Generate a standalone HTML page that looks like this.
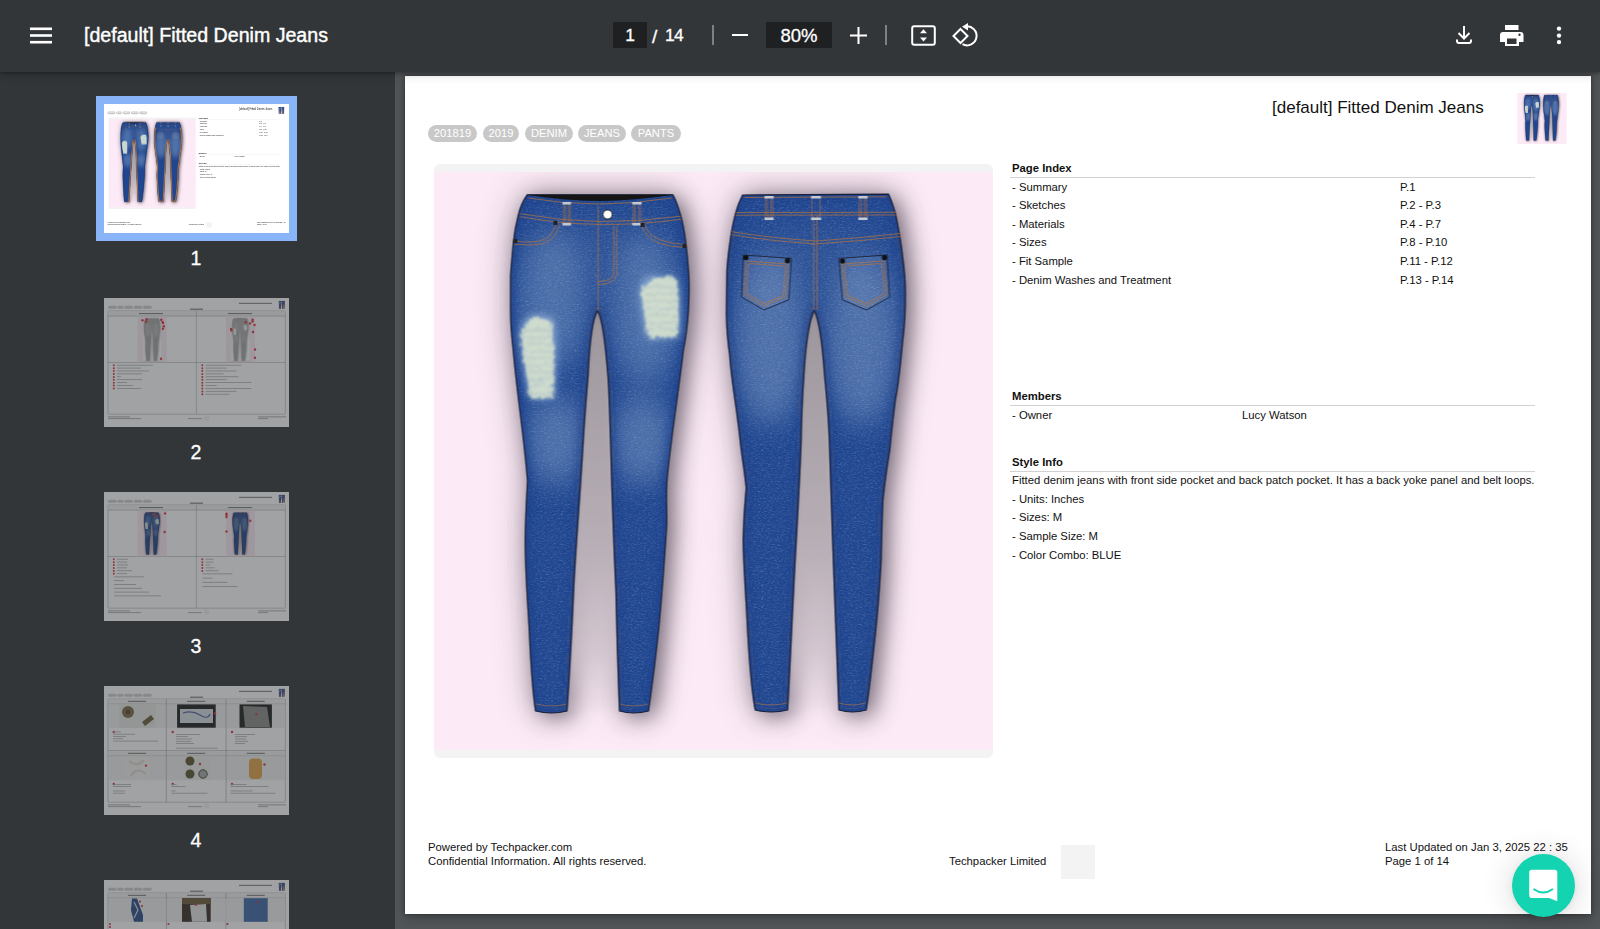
<!DOCTYPE html>
<html><head><meta charset="utf-8">
<style>
html,body{margin:0;padding:0;}
body{width:1600px;height:929px;overflow:hidden;position:relative;background:#525659;font-family:"Liberation Sans",sans-serif;}
#toolbar{position:absolute;left:0;top:0;width:1600px;height:72px;background:#323639;z-index:5;box-shadow:0 1px 4px rgba(0,0,0,.35),0 3px 10px rgba(0,0,0,.15);color:#fff;}
#sidebar{position:absolute;left:0;top:72px;width:395px;height:857px;background:#323639;z-index:2;overflow:hidden;}
#page{position:absolute;left:405px;top:76px;width:1186px;height:838px;background:#fff;z-index:1;box-shadow:0 0 4px rgba(0,0,0,.35),0 4px 12px rgba(0,0,0,.25);}
.abs{position:absolute;}
.t{position:absolute;white-space:nowrap;font-size:11.3px;color:#111;line-height:1;}
.b{font-weight:bold;}
.tag{position:absolute;top:48.5px;height:17px;border-radius:9px;background:#c8c8c8;color:#fff;font-size:11.2px;line-height:17px;text-align:center;}
.hr{position:absolute;height:1px;background:#d2d2d2;}
.num{position:absolute;color:#fff;font-size:19.5px;-webkit-text-stroke:0.3px #fff;width:40px;text-align:center;left:176px;}
.thumb{position:absolute;left:104px;width:185px;height:129px;background:#a0a1a3;}
</style></head><body>
<svg width="0" height="0" style="position:absolute">
<defs>
<filter id="shd" x="-30%" y="-10%" width="160%" height="130%">
<feGaussianBlur stdDeviation="11"/>
</filter>
<filter id="shd2" x="-40%" y="-15%" width="180%" height="130%"><feGaussianBlur stdDeviation="18"/></filter>
<filter id="glow" x="-50%" y="-50%" width="200%" height="200%"><feGaussianBlur stdDeviation="14"/></filter>
<filter id="edge" x="-10%" y="-10%" width="120%" height="120%"><feGaussianBlur stdDeviation="3"/></filter>
<filter id="noise" x="0" y="0" width="100%" height="100%"><feTurbulence type="fractalNoise" baseFrequency="0.7" numOctaves="2" seed="3"/><feColorMatrix type="matrix" values="0 0 0 0 0.55  0 0 0 0 0.7  0 0 0 0 0.95  3 0 0 0 -1.5"/></filter>
<filter id="noiseD" x="0" y="0" width="100%" height="100%"><feTurbulence type="fractalNoise" baseFrequency="0.7" numOctaves="2" seed="11"/><feColorMatrix type="matrix" values="0 0 0 0 0.05  0 0 0 0 0.12  0 0 0 0 0.38  -3 0 0 0 1.5"/></filter>
<filter id="gapb" x="-20%" y="-5%" width="140%" height="110%"><feGaussianBlur stdDeviation="2"/></filter>
<linearGradient id="gapg" x1="0" y1="0" x2="0" y2="1"><stop offset="0" stop-color="#9d969c"/><stop offset="0.3" stop-color="#aaa3a9"/><stop offset="0.6" stop-color="#b9afb7"/><stop offset="0.85" stop-color="#cdc1ca" stop-opacity="0.8"/><stop offset="1" stop-color="#dccfd9" stop-opacity="0.2"/></linearGradient>
<filter id="bw" x="0" y="0" width="100%" height="100%"><feColorMatrix type="matrix" values="0.25 0.45 0.1 0 0.32  0.25 0.45 0.1 0 0.32  0.25 0.45 0.1 0 0.32  0 0 0 1 0"/></filter>
<filter id="patchB" x="-30%" y="-30%" width="160%" height="160%"><feTurbulence type="turbulence" baseFrequency="0.35 0.12" numOctaves="2" seed="5" result="t"/><feDisplacementMap in="SourceGraphic" in2="t" scale="7" xChannelSelector="R" yChannelSelector="G" result="d"/><feGaussianBlur in="d" stdDeviation="1"/></filter><filter id="patchHalo" x="-50%" y="-50%" width="200%" height="200%"><feGaussianBlur stdDeviation="4"/></filter>
<filter id="stitch" x="-5%" y="-5%" width="110%" height="110%" color-interpolation-filters="sRGB"><feMorphology in="SourceAlpha" operator="erode" radius="2.5" result="e1"/><feMorphology in="SourceAlpha" operator="erode" radius="3.3" result="e2"/><feComposite in="e1" in2="e2" operator="out" result="ring"/><feFlood flood-color="#b8743a" flood-opacity="0.9"/><feComposite in2="ring" operator="in"/></filter>
<clipPath id="fInClip"><path d="M585,300 L610,300 L632,725 L553,725 Z"/></clipPath>
<clipPath id="bInClip"><path d="M700,228 L930,228 L930,725 L700,725 Z"/></clipPath>
<clipPath id="jclip"><use href="#fOut"/><use href="#bOut"/></clipPath>
<linearGradient id="frontShade" x1="0" y1="0" x2="0" y2="1" gradientUnits="objectBoundingBox">
<stop offset="0" stop-color="#3464b8"/>
<stop offset="0.18" stop-color="#4a78c0"/>
<stop offset="0.35" stop-color="#4b78bf"/>
<stop offset="0.55" stop-color="#3160b4"/>
<stop offset="0.75" stop-color="#2b58ad"/>
<stop offset="1" stop-color="#2955ab"/>
</linearGradient>
<linearGradient id="backShade" x1="0" y1="0" x2="0" y2="1" gradientUnits="objectBoundingBox">
<stop offset="0" stop-color="#2f5fb4"/>
<stop offset="0.2" stop-color="#4a78c0"/>
<stop offset="0.38" stop-color="#4a77be"/>
<stop offset="0.55" stop-color="#2f5db2"/>
<stop offset="1" stop-color="#2955ab"/>
</linearGradient>
<symbol id="jeans" viewBox="433.5 172 559.5 578">
<rect x="433.5" y="172" width="559.5" height="578" fill="#fcebf6"/>
<g filter="url(#shd2)" opacity="0.45" fill="#5a4f5e"><use href="#fOut"/><use href="#bOut"/></g>
<g filter="url(#shd)" opacity="0.75" transform="translate(6,4)" fill="#564c5a">
<path id="fOut" d="M526.7,194.8 L672.4,194.8 C676,201 678,208 680.3,215.8 C684,228 687,255 688.4,276 C689,292 688.5,302 687.9,311 C687,325 685,340 682.9,350 C677,400 668,455 666.2,485 C665.5,500 666.5,515 666.2,525 C664,560 661,600 658.3,628 C655,660 651,690 648,711 Q633,715 619,711 C617,660 616,620 615.4,591 C613,540 611,480 610,440 C609,410 608.5,390 607.4,376 C605,345 602,318 597.1,310.7 C592,318 589,345 587.6,376 C586,395 584,420 582.8,440 C580,490 575,550 573.1,591 C571,640 568,690 566.5,711 Q551,715 535,711 C532,690 530,660 528.7,629 C527,600 524.7,570 524.7,541 C524.8,520 526,500 527,481 C524,440 516,390 512.7,350 C511,335 510,322 510,311 C510,295 510,285 510,276 C511,262 512,252 512.9,242 C514,232 516,222 518.1,214 C520,206 523,200 526.7,194.8 Z"/>
<path id="bOut" d="M742.1,195 L887.9,194.1 C891,200 893,207 895,213.6 C898,228 901,245 902.1,256.4 C904,270 905,285 905,293.6 C905,310 904,328 902.1,342 C900,365 898,385 895,399 C893,415 891,432 889.3,450 C886,470 884,485 882.5,500 C881.5,520 881,545 880.7,560.5 C879,590 877,615 874.7,635.8 C872,660 869,690 865.7,710 Q852,714 838.4,710 C837,670 835,620 833.9,591 C832,540 830,480 828.8,440 C828,420 826,395 824.1,376.2 C822,345 818,318 813.8,310.7 C809,318 805,345 803.4,376.2 C802,395 801,420 800.7,440 C799,490 795,550 793.1,591 C791,630 789,680 787.1,710 Q771,714 754.7,710 C751,690 748,650 746.6,620.7 C745,590 742.7,560 742.7,539.4 C743,520 744.5,500 745.7,488 C744,470 741,455 739.6,440 C738,425 737,420 736.4,413.6 C733,390 730,370 729.3,356 C727,340 726,325 725.9,313.6 C726,295 726.2,280 726.4,270.7 C727,258 729,245 730.7,233.6 C732,226 733.5,219 735,213.6 C737,206 739.5,200 742.1,195 Z"/>
</g>
<g filter="url(#gapb)">
<path d="M597.1,312 C592,318 589,345 587.6,376 C586,395 584,420 582.8,440 C580,490 575,550 573.1,591 C571,640 568,690 566.5,711 L619,711 C617,660 616,620 615.4,591 C613,540 611,480 610,440 C609,410 608.5,390 607.4,376 C605,345 602,318 597.1,312 Z" fill="url(#gapg)"/>
<path d="M813.8,312 C809,318 805,345 803.4,376.2 C802,395 801,420 800.7,440 C799,490 795,550 793.1,591 C791,630 789,680 787.1,710 L838.4,710 C837,670 835,620 833.9,591 C832,540 830,480 828.8,440 C828,420 826,395 824.1,376.2 C822,345 818,318 813.8,312 Z" fill="url(#gapg)"/>
</g>
<g clip-path="url(#jclip)">
<rect x="500" y="185" width="420" height="540" fill="#20468f"/>
<g filter="url(#glow)" fill="#5c7db1">
<ellipse cx="552" cy="300" rx="34" ry="70" opacity="0.75"/>
<ellipse cx="556" cy="440" rx="30" ry="45" opacity="0.8"/>
<ellipse cx="645" cy="310" rx="34" ry="75" opacity="0.75"/>
<ellipse cx="642" cy="440" rx="30" ry="45" opacity="0.8"/>
<ellipse cx="770" cy="340" rx="36" ry="85" opacity="0.8"/>
<ellipse cx="862" cy="340" rx="36" ry="85" opacity="0.8"/>
<ellipse cx="600" cy="250" rx="70" ry="30" opacity="0.2"/>
<ellipse cx="815" cy="255" rx="70" ry="30" opacity="0.2"/>
</g>
<rect x="500" y="185" width="420" height="540" filter="url(#noise)" opacity="0.28"/><rect x="500" y="185" width="420" height="540" filter="url(#noiseD)" opacity="0.5"/>
<g fill="none" stroke="#1d3f8a" stroke-width="10" filter="url(#edge)" opacity="0.6">
<use href="#fOut"/><use href="#bOut"/>
</g>
</g>
<g fill="none" stroke="#1b2238" stroke-width="1.2"><use href="#fOut"/><use href="#bOut"/></g>
<path d="M526.7,194.8 L672.4,194.8 Q597,207 526.7,194.8 Z" fill="#151515"/>
<g fill="none" stroke="#b8743a" stroke-width="0.7">
<path d="M528,198 Q597,210 671,198"/>
<path d="M519.3,213.6 Q597,228 680.3,216.2"/>
<path d="M519.5,216.6 Q597,231 680.8,219.2"/>
<path d="M597.7,206 L597.7,311"/>
<path d="M613.2,226 L613.2,274 Q612,281 598,281.5"/>
<path d="M616.2,226 L616.2,275 Q614.5,284 598,284.5"/>
<path d="M514,241.2 Q545,245 552,232 Q555,227 556.3,224"/>
<path d="M514,244.2 Q548,248 555,234 Q558,229 559.3,225"/>
<path d="M645,225.6 Q647,235 660,240 Q672,244 684,244.5"/>
<path d="M641.8,226 Q644,237 658,243 Q670,247 684.5,247.5"/>
</g>
<g fill="none" stroke="#b8743a" stroke-width="0.6">
<path d="M563,204 L563,224 M564.8,204 L564.8,224 M568,204 L568,224 M569.8,204 L569.8,224 M632.7,204 L632.7,224 M634.5,204 L634.5,224 M638.3,204 L638.3,224 M640.1,204 L640.1,224"/>
</g>
<g fill="#c4c9d4"><rect x="562" y="202" width="8.5" height="2.5"/><rect x="562" y="223" width="8.5" height="2.5"/><rect x="631.7" y="202" width="9.4" height="2.5"/><rect x="631.7" y="223" width="9.4" height="2.5"/></g>
<circle cx="607.1" cy="214.5" r="4.6" fill="#fff" stroke="#222" stroke-width="1"/>
<g fill="#222"><rect x="553" y="221" width="4" height="4"/><rect x="513" y="239" width="4" height="4"/><rect x="640" y="223" width="4" height="4"/><rect x="682" y="244" width="4" height="4"/></g>
<!-- distressed patches -->
<g filter="url(#patchHalo)" fill="#9ab8dc" opacity="0.9">
<path d="M646,277 L674,278 C679,285 679,320 678,337 L647,338 C643,320 640,300 640,287 Z"/>
<path d="M526,318 C535,314 548,316 553,320 C555,345 555,375 553,398 L529,398 C524,375 520,345 520,330 Z"/>
</g>
<g transform="translate(-2,-1.5)"><g filter="url(#patchB)" fill="#d6e0cc" opacity="0.9">
<path d="M655,277 C662,276 670,277 676,279 C678,292 678,320 678,337 L648,338 C645,322 642,305 641,291 C645,286 650,281 655,277 Z"/>
<path d="M532,318 C540,317 548,319 552,322 C554,345 554,375 553,398 L530,398 C526,375 522,350 521,333 C524,327 527,322 532,318 Z"/>
</g>
<g stroke="#7f9cc0" stroke-width="0.9" opacity="0.45" fill="none" filter="url(#patchB)">
<path d="M646,287 Q660,285 677,288 M643,294 Q660,296 677,293 M644,301 Q660,299 677,302 M645,308 Q662,310 677,307 M646,315 Q660,313 677,316 M647,322 Q662,324 677,321 M647,329 Q660,327 677,330"/>
<path d="M524,330 Q538,328 552,331 M524,337 Q538,339 552,336 M525,344 Q538,342 552,345 M525,351 Q538,353 552,350 M526,358 Q538,356 552,359 M527,365 Q538,367 552,364 M528,372 Q538,370 552,373 M528,379 Q538,381 552,378 M529,386 Q538,384 552,387 M529,393 Q538,395 552,392"/>
</g></g>

<g fill="none" stroke="#b8743a" stroke-width="0.7">
<path d="M744,197.5 L886,196.8"/>
<path d="M735.5,212.6 L895,212.3"/>
<path d="M735,215.2 L895.5,215"/>
<path d="M731,231.7 Q770,238 815,241 Q860,238 901,233.4"/>
<path d="M730.5,234.7 Q770,241 815,244 Q860,241 901.5,236.4"/>
<path d="M813.2,216 L813.2,310"/>
<path d="M816.6,216 L816.6,310"/>
</g>
<g fill="#ffffff" fill-opacity="0.05" stroke="#1b2238" stroke-width="0.9">
<path d="M742.7,255 L791,258.4 L788.4,299.7 L763.4,310 L741,297.1 Z"/>
<path d="M838.3,258.4 L886.6,255 L889.2,297.1 L865.9,310 L841.8,299.7 Z"/>
</g>
<g fill="none" stroke="#b8743a" stroke-width="0.7">
<path d="M745.5,261 L787.5,264 L785,297 L763.5,306 L744,295 Z"/>
<path d="M841.5,264 L883.5,261 L886,295 L866,306 L845,297 Z"/>
<path d="M747.8,263.5 L785.2,266.2 L782.8,295.5 L763.5,303.5 L746.3,293.6 Z"/>
<path d="M843.8,266.2 L881.2,263.5 L883.7,293.6 L866,303.5 L847.2,295.5 Z"/>
</g>
<g fill="none" stroke="#b8743a" stroke-width="0.6">
<path d="M765,198 L765,218 M767,198 L767,218 M770.5,198 L770.5,218 M772.4,198 L772.4,218 M811.5,198 L811.5,218 M819.5,198 L819.5,218 M858.8,198 L858.8,218 M860.8,198 L860.8,218 M864.2,198 L864.2,218 M866.2,198 L866.2,218"/>
</g>
<g fill="#c4c9d4"><rect x="764" y="196" width="9.2" height="2.5"/><rect x="764" y="217.5" width="9.2" height="2.5"/><rect x="810.5" y="196" width="10" height="2.5"/><rect x="810.5" y="217.5" width="10" height="2.5"/><rect x="857.8" y="196" width="9.3" height="2.5"/><rect x="857.8" y="217.5" width="9.3" height="2.5"/></g>
<g fill="#111"><circle cx="745.4" cy="257.5" r="2.6"/><circle cx="787" cy="260.7" r="2.6"/><circle cx="842" cy="261" r="2.6"/><circle cx="884" cy="257.6" r="2.6"/></g>

<g filter="url(#stitch)" clip-path="url(#fInClip)"><use href="#fOut" fill="#000"/></g>
<g filter="url(#stitch)" clip-path="url(#bInClip)"><use href="#bOut" fill="#000"/></g>
<g fill="none" stroke="#b8743a" stroke-width="0.6">
<path d="M535.5,704 Q551,708 566,704"/><path d="M619.5,704 Q633,708 647.5,704"/><path d="M755,703 Q771,707 786.5,703"/><path d="M838.5,703 Q852,707 865,703"/>
</g>
</symbol>
<symbol id="jeansS" viewBox="433.5 172 559.5 578">
<rect x="433.5" y="172" width="559.5" height="578" fill="#fcebf6"/>
<g filter="url(#shd2)" opacity="0.45" fill="#5a4f5e"><use href="#fOut"/><use href="#bOut"/></g>
<g filter="url(#shd)" opacity="0.75" transform="translate(6,4)" fill="#564c5a">
<path id="fOutS" d="M526.7,194.8 L672.4,194.8 C676,201 678,208 680.3,215.8 C684,228 687,255 688.4,276 C689,292 688.5,302 687.9,311 C687,325 685,340 682.9,350 C677,400 668,455 666.2,485 C665.5,500 666.5,515 666.2,525 C664,560 661,600 658.3,628 C655,660 651,690 648,711 Q633,715 619,711 C617,660 616,620 615.4,591 C613,540 611,480 610,440 C609,410 608.5,390 607.4,376 C605,345 602,318 597.1,310.7 C592,318 589,345 587.6,376 C586,395 584,420 582.8,440 C580,490 575,550 573.1,591 C571,640 568,690 566.5,711 Q551,715 535,711 C532,690 530,660 528.7,629 C527,600 524.7,570 524.7,541 C524.8,520 526,500 527,481 C524,440 516,390 512.7,350 C511,335 510,322 510,311 C510,295 510,285 510,276 C511,262 512,252 512.9,242 C514,232 516,222 518.1,214 C520,206 523,200 526.7,194.8 Z"/>
<path id="bOutS" d="M742.1,195 L887.9,194.1 C891,200 893,207 895,213.6 C898,228 901,245 902.1,256.4 C904,270 905,285 905,293.6 C905,310 904,328 902.1,342 C900,365 898,385 895,399 C893,415 891,432 889.3,450 C886,470 884,485 882.5,500 C881.5,520 881,545 880.7,560.5 C879,590 877,615 874.7,635.8 C872,660 869,690 865.7,710 Q852,714 838.4,710 C837,670 835,620 833.9,591 C832,540 830,480 828.8,440 C828,420 826,395 824.1,376.2 C822,345 818,318 813.8,310.7 C809,318 805,345 803.4,376.2 C802,395 801,420 800.7,440 C799,490 795,550 793.1,591 C791,630 789,680 787.1,710 Q771,714 754.7,710 C751,690 748,650 746.6,620.7 C745,590 742.7,560 742.7,539.4 C743,520 744.5,500 745.7,488 C744,470 741,455 739.6,440 C738,425 737,420 736.4,413.6 C733,390 730,370 729.3,356 C727,340 726,325 725.9,313.6 C726,295 726.2,280 726.4,270.7 C727,258 729,245 730.7,233.6 C732,226 733.5,219 735,213.6 C737,206 739.5,200 742.1,195 Z"/>
</g>
<g filter="url(#gapb)">
<path d="M597.1,312 C592,318 589,345 587.6,376 C586,395 584,420 582.8,440 C580,490 575,550 573.1,591 C571,640 568,690 566.5,711 L619,711 C617,660 616,620 615.4,591 C613,540 611,480 610,440 C609,410 608.5,390 607.4,376 C605,345 602,318 597.1,312 Z" fill="url(#gapg)"/>
<path d="M813.8,312 C809,318 805,345 803.4,376.2 C802,395 801,420 800.7,440 C799,490 795,550 793.1,591 C791,630 789,680 787.1,710 L838.4,710 C837,670 835,620 833.9,591 C832,540 830,480 828.8,440 C828,420 826,395 824.1,376.2 C822,345 818,318 813.8,312 Z" fill="url(#gapg)"/>
</g>
<g clip-path="url(#jclip)">
<rect x="500" y="185" width="420" height="540" fill="#20468f"/>
<g filter="url(#glow)" fill="#5c7db1">
<ellipse cx="552" cy="300" rx="34" ry="70" opacity="0.75"/>
<ellipse cx="556" cy="440" rx="30" ry="45" opacity="0.8"/>
<ellipse cx="645" cy="310" rx="34" ry="75" opacity="0.75"/>
<ellipse cx="642" cy="440" rx="30" ry="45" opacity="0.8"/>
<ellipse cx="770" cy="340" rx="36" ry="85" opacity="0.8"/>
<ellipse cx="862" cy="340" rx="36" ry="85" opacity="0.8"/>
<ellipse cx="600" cy="250" rx="70" ry="30" opacity="0.2"/>
<ellipse cx="815" cy="255" rx="70" ry="30" opacity="0.2"/>
</g>

<g fill="none" stroke="#1d3f8a" stroke-width="10" filter="url(#edge)" opacity="0.6">
<use href="#fOut"/><use href="#bOut"/>
</g>
</g>
<g fill="none" stroke="#1b2238" stroke-width="1.2"><use href="#fOut"/><use href="#bOut"/></g>
<path d="M526.7,194.8 L672.4,194.8 Q597,207 526.7,194.8 Z" fill="#151515"/>
<g fill="none" stroke="#b8743a" stroke-width="0.7">
<path d="M528,198 Q597,210 671,198"/>
<path d="M519.3,213.6 Q597,228 680.3,216.2"/>
<path d="M519.5,216.6 Q597,231 680.8,219.2"/>
<path d="M597.7,206 L597.7,311"/>
<path d="M613.2,226 L613.2,274 Q612,281 598,281.5"/>
<path d="M616.2,226 L616.2,275 Q614.5,284 598,284.5"/>
<path d="M514,241.2 Q545,245 552,232 Q555,227 556.3,224"/>
<path d="M514,244.2 Q548,248 555,234 Q558,229 559.3,225"/>
<path d="M645,225.6 Q647,235 660,240 Q672,244 684,244.5"/>
<path d="M641.8,226 Q644,237 658,243 Q670,247 684.5,247.5"/>
</g>
<g fill="none" stroke="#b8743a" stroke-width="0.6">
<path d="M563,204 L563,224 M564.8,204 L564.8,224 M568,204 L568,224 M569.8,204 L569.8,224 M632.7,204 L632.7,224 M634.5,204 L634.5,224 M638.3,204 L638.3,224 M640.1,204 L640.1,224"/>
</g>
<g fill="#c4c9d4"><rect x="562" y="202" width="8.5" height="2.5"/><rect x="562" y="223" width="8.5" height="2.5"/><rect x="631.7" y="202" width="9.4" height="2.5"/><rect x="631.7" y="223" width="9.4" height="2.5"/></g>
<circle cx="607.1" cy="214.5" r="4.6" fill="#fff" stroke="#222" stroke-width="1"/>
<g fill="#222"><rect x="553" y="221" width="4" height="4"/><rect x="513" y="239" width="4" height="4"/><rect x="640" y="223" width="4" height="4"/><rect x="682" y="244" width="4" height="4"/></g>
<!-- distressed patches -->
<g filter="url(#patchHalo)" fill="#9ab8dc" opacity="0.9">
<path d="M646,277 L674,278 C679,285 679,320 678,337 L647,338 C643,320 640,300 640,287 Z"/>
<path d="M526,318 C535,314 548,316 553,320 C555,345 555,375 553,398 L529,398 C524,375 520,345 520,330 Z"/>
</g>
<g transform="translate(-2,-1.5)"><g filter="url(#patchB)" fill="#d6e0cc" opacity="0.9">
<path d="M655,277 C662,276 670,277 676,279 C678,292 678,320 678,337 L648,338 C645,322 642,305 641,291 C645,286 650,281 655,277 Z"/>
<path d="M532,318 C540,317 548,319 552,322 C554,345 554,375 553,398 L530,398 C526,375 522,350 521,333 C524,327 527,322 532,318 Z"/>
</g>
<g stroke="#7f9cc0" stroke-width="0.9" opacity="0.45" fill="none" filter="url(#patchB)">
<path d="M646,287 Q660,285 677,288 M643,294 Q660,296 677,293 M644,301 Q660,299 677,302 M645,308 Q662,310 677,307 M646,315 Q660,313 677,316 M647,322 Q662,324 677,321 M647,329 Q660,327 677,330"/>
<path d="M524,330 Q538,328 552,331 M524,337 Q538,339 552,336 M525,344 Q538,342 552,345 M525,351 Q538,353 552,350 M526,358 Q538,356 552,359 M527,365 Q538,367 552,364 M528,372 Q538,370 552,373 M528,379 Q538,381 552,378 M529,386 Q538,384 552,387 M529,393 Q538,395 552,392"/>
</g></g>

<g fill="none" stroke="#b8743a" stroke-width="0.7">
<path d="M744,197.5 L886,196.8"/>
<path d="M735.5,212.6 L895,212.3"/>
<path d="M735,215.2 L895.5,215"/>
<path d="M731,231.7 Q770,238 815,241 Q860,238 901,233.4"/>
<path d="M730.5,234.7 Q770,241 815,244 Q860,241 901.5,236.4"/>
<path d="M813.2,216 L813.2,310"/>
<path d="M816.6,216 L816.6,310"/>
</g>
<g fill="#ffffff" fill-opacity="0.05" stroke="#1b2238" stroke-width="0.9">
<path d="M742.7,255 L791,258.4 L788.4,299.7 L763.4,310 L741,297.1 Z"/>
<path d="M838.3,258.4 L886.6,255 L889.2,297.1 L865.9,310 L841.8,299.7 Z"/>
</g>
<g fill="none" stroke="#b8743a" stroke-width="0.7">
<path d="M745.5,261 L787.5,264 L785,297 L763.5,306 L744,295 Z"/>
<path d="M841.5,264 L883.5,261 L886,295 L866,306 L845,297 Z"/>
<path d="M747.8,263.5 L785.2,266.2 L782.8,295.5 L763.5,303.5 L746.3,293.6 Z"/>
<path d="M843.8,266.2 L881.2,263.5 L883.7,293.6 L866,303.5 L847.2,295.5 Z"/>
</g>
<g fill="none" stroke="#b8743a" stroke-width="0.6">
<path d="M765,198 L765,218 M767,198 L767,218 M770.5,198 L770.5,218 M772.4,198 L772.4,218 M811.5,198 L811.5,218 M819.5,198 L819.5,218 M858.8,198 L858.8,218 M860.8,198 L860.8,218 M864.2,198 L864.2,218 M866.2,198 L866.2,218"/>
</g>
<g fill="#c4c9d4"><rect x="764" y="196" width="9.2" height="2.5"/><rect x="764" y="217.5" width="9.2" height="2.5"/><rect x="810.5" y="196" width="10" height="2.5"/><rect x="810.5" y="217.5" width="10" height="2.5"/><rect x="857.8" y="196" width="9.3" height="2.5"/><rect x="857.8" y="217.5" width="9.3" height="2.5"/></g>
<g fill="#111"><circle cx="745.4" cy="257.5" r="2.6"/><circle cx="787" cy="260.7" r="2.6"/><circle cx="842" cy="261" r="2.6"/><circle cx="884" cy="257.6" r="2.6"/></g>

<g filter="url(#stitch)" clip-path="url(#fInClip)"><use href="#fOut" fill="#000"/></g>
<g filter="url(#stitch)" clip-path="url(#bInClip)"><use href="#bOut" fill="#000"/></g>
<g fill="none" stroke="#b8743a" stroke-width="0.6">
<path d="M535.5,704 Q551,708 566,704"/><path d="M619.5,704 Q633,708 647.5,704"/><path d="M755,703 Q771,707 786.5,703"/><path d="M838.5,703 Q852,707 865,703"/>
</g>
</symbol>













</defs>
</svg>

<div id="toolbar">
  <svg class="abs" style="left:30px;top:27px" width="22" height="17" viewBox="0 0 22 17"><rect x="0" y="0.5" width="22" height="2.6" fill="#fff"/><rect x="0" y="7.2" width="22" height="2.6" fill="#fff"/><rect x="0" y="13.9" width="22" height="2.6" fill="#fff"/></svg>
  <div class="abs" style="left:84px;top:24px;font-size:19.6px;line-height:22px;color:#fff;white-space:nowrap;-webkit-text-stroke:0.4px #fff;">[default] Fitted Denim Jeans</div>
  <div class="abs" style="left:613px;top:22px;width:34px;height:26px;background:#1e2022;"></div>
  <div class="abs" style="left:613px;top:26px;width:34px;text-align:center;font-size:17.4px;line-height:19px;color:#fff;-webkit-text-stroke:0.3px #fff;">1</div>
  <div class="abs" style="left:652px;top:26.5px;font-size:19px;line-height:20px;color:#fff;-webkit-text-stroke:0.3px #fff;">/</div><div class="abs" style="left:665px;top:26px;font-size:17.4px;line-height:19px;color:#fff;letter-spacing:-0.6px;-webkit-text-stroke:0.3px #fff;">14</div>
  <div class="abs" style="left:712px;top:25px;width:1.5px;height:20px;background:#7d8084;"></div>
  <div class="abs" style="left:732px;top:34px;width:16px;height:2px;background:#fff;"></div>
  <div class="abs" style="left:766px;top:22px;width:66px;height:26px;background:#1e2022;"></div>
  <div class="abs" style="left:766px;top:25.5px;width:66px;text-align:center;font-size:18.5px;line-height:20px;color:#fff;-webkit-text-stroke:0.3px #fff;">80%</div>
  <svg class="abs" style="left:850px;top:27px" width="17" height="17" viewBox="0 0 17 17"><rect x="0" y="7.5" width="17" height="2" fill="#fff"/><rect x="7.5" y="0" width="2" height="17" fill="#fff"/></svg>
  <div class="abs" style="left:885px;top:25px;width:1.5px;height:20px;background:#7d8084;"></div>
  <svg class="abs" style="left:910px;top:24px" width="28" height="24" viewBox="0 0 28 24"><rect x="2.2" y="2.2" width="22.6" height="18.6" rx="2" fill="none" stroke="#fff" stroke-width="2"/><path d="M13.5,5.2 L17,9.2 L10,9.2 Z M13.5,17.4 L17,13.4 L10,13.4 Z" fill="#fff"/></svg>
  <svg class="abs" style="left:950px;top:22px" width="30" height="28" viewBox="0 0 30 28"><path d="M10.5,7 L17.5,14 L10.5,21 L3.5,14 Z" fill="none" stroke="#fff" stroke-width="2"/><path d="M15.5,4.5 A9.5,9.5 0 1 1 12.5,22.2" fill="none" stroke="#fff" stroke-width="2"/><path d="M18,1 L18,8.5 L12,4.8 Z" fill="#fff"/></svg>
  <svg class="abs" style="left:1454px;top:24px" width="20" height="22" viewBox="0 0 20 22"><path d="M10,2 L10,14" stroke="#fff" stroke-width="2" fill="none"/><path d="M4.5,9 L10,14.5 L15.5,9" stroke="#fff" stroke-width="2" fill="none"/><path d="M3,15.5 L3,17 Q3,19 5,19 L15,19 Q17,19 17,17 L17,15.5" stroke="#fff" stroke-width="2" fill="none"/></svg>
  <svg class="abs" style="left:1499px;top:24px" width="26" height="23" viewBox="0 0 26 23"><rect x="6" y="1" width="13.5" height="5" fill="#fff"/><path d="M1,11 Q1,8 4,8 L21.5,8 Q24.5,8 24.5,11 L24.5,18 L20,18 L20,22 L6,22 L6,18 L1,18 Z" fill="#fff"/><rect x="8" y="14.5" width="9.5" height="5.5" fill="#323639"/><circle cx="20.5" cy="10.8" r="1.2" fill="#323639"/></svg>
  <svg class="abs" style="left:1554px;top:24px" width="10" height="23" viewBox="0 0 10 23"><circle cx="5" cy="4.6" r="2.2" fill="#fff"/><circle cx="5" cy="11.6" r="2.2" fill="#fff"/><circle cx="5" cy="18.1" r="2.2" fill="#fff"/></svg>
</div>

<div id="sidebar">
  <div class="abs" style="left:96px;top:24px;width:201px;height:145px;background:#8ab4f8;"></div>
  <div class="abs" style="left:104px;top:32px;width:185px;height:129px;background:#fff;overflow:hidden;"><div id="th1" style="position:absolute;left:0;top:0;width:1186px;height:838px;transform-origin:0 0;transform:scale(0.156,0.1539);"><!--TH1-->
  <div class="t" style="left:867px;top:23px;font-size:17px;">[default] Fitted Denim Jeans</div>
  <svg class="abs" style="left:1112px;top:17px" width="50" height="51"><use href="#jeansS" width="50" height="51"/></svg>
  <div class="tag" style="left:23px;width:49px;">201819</div>
  <div class="tag" style="left:78px;width:36px;">2019</div>
  <div class="tag" style="left:120px;width:48px;">DENIM</div>
  <div class="tag" style="left:173px;width:48px;">JEANS</div>
  <div class="tag" style="left:226px;width:50px;">PANTS</div>
  <div class="abs" style="left:28.5px;top:88px;width:559.5px;height:594px;background:#f3f3f3;border-radius:6px;"></div>
  <svg class="abs" style="left:28.5px;top:96px" width="559.5" height="578"><use href="#jeansS" width="559.5" height="578"/></svg>

  <div class="t b" style="left:607px;top:87px;">Page Index</div>
  <div class="hr" style="left:605px;top:101px;width:525px;"></div>
  <div class="t" style="left:607px;top:105.5px;">- Summary</div><div class="t" style="left:995px;top:105.5px;">P.1</div>
  <div class="t" style="left:607px;top:124px;">- Sketches</div><div class="t" style="left:995px;top:124px;">P.2 - P.3</div>
  <div class="t" style="left:607px;top:142.5px;">- Materials</div><div class="t" style="left:995px;top:142.5px;">P.4 - P.7</div>
  <div class="t" style="left:607px;top:161px;">- Sizes</div><div class="t" style="left:995px;top:161px;">P.8 - P.10</div>
  <div class="t" style="left:607px;top:180px;">- Fit Sample</div><div class="t" style="left:995px;top:180px;">P.11 - P.12</div>
  <div class="t" style="left:607px;top:198.5px;">- Denim Washes and Treatment</div><div class="t" style="left:995px;top:198.5px;">P.13 - P.14</div>

  <div class="t b" style="left:607px;top:315px;">Members</div>
  <div class="hr" style="left:605px;top:329px;width:525px;"></div>
  <div class="t" style="left:607px;top:333.5px;">- Owner</div><div class="t" style="left:837px;top:333.5px;">Lucy Watson</div>

  <div class="t b" style="left:607px;top:380.5px;">Style Info</div>
  <div class="hr" style="left:605px;top:394.5px;width:525px;"></div>
  <div class="t" style="left:607px;top:399px;">Fitted denim jeans with front side pocket and back patch pocket. It has a back yoke panel and belt loops.</div>
  <div class="t" style="left:607px;top:417.5px;">- Units: Inches</div>
  <div class="t" style="left:607px;top:436px;">- Sizes: M</div>
  <div class="t" style="left:607px;top:455px;">- Sample Size: M</div>
  <div class="t" style="left:607px;top:473.5px;">- Color Combo: BLUE</div>

  <div class="t" style="left:23px;top:766px;">Powered by Techpacker.com</div>
  <div class="t" style="left:23px;top:780px;">Confidential Information. All rights reserved.</div>
  <div class="t" style="left:544px;top:780px;">Techpacker Limited</div>
  <div class="abs" style="left:656px;top:769px;width:34px;height:34px;background:#f3f3f3;"></div>
  <div class="t" style="left:980px;top:766px;">Last Updated on Jan 3, 2025 22 : 35</div>
  <div class="t" style="left:980px;top:780px;">Page 1 of 14</div>
</div></div>
  <div class="num" style="top:175px;">1</div>
<div class="abs" style="left:104px;top:226px;width:185px;height:129px;opacity:0.54;"><svg width="185" height="129" viewBox="0 0 185 129"><rect width="185" height="129" fill="#fff"/><rect x="4" y="7.8" width="8.6" height="3" rx="1.5" fill="#cfcfcf"/><rect x="13.3" y="7.8" width="6.5" height="3" rx="1.5" fill="#cfcfcf"/><rect x="20.5" y="7.8" width="8.5" height="3" rx="1.5" fill="#cfcfcf"/><rect x="29.7" y="7.8" width="8.5" height="3" rx="1.5" fill="#cfcfcf"/><rect x="38.9" y="7.8" width="8.8" height="3" rx="1.5" fill="#cfcfcf"/><rect x="135" y="4.8" width="33" height="1.2" fill="#8a8a8a"/><svg x="174.5" y="2.5" width="6.5" height="8.5" viewBox="500 185 420 535" preserveAspectRatio="none"><use href="#jeansS" x="433.5" y="172" width="559.5" height="578"/></svg><rect x="4" y="118.5" width="22" height="0.8" fill="#9a9a9a"/><rect x="4" y="120.3" width="33" height="0.8" fill="#9a9a9a"/><rect x="84" y="120.3" width="14" height="0.8" fill="#9a9a9a"/><rect x="100" y="117.5" width="5" height="5" fill="#f2f2f2"/><rect x="154" y="118.5" width="28" height="0.8" fill="#9a9a9a"/><rect x="154" y="120.3" width="10" height="0.8" fill="#9a9a9a"/><rect x="86" y="10.6" width="13" height="1.2" fill="#808080"/><rect x="4" y="13" width="177.3" height="103.2" fill="none" stroke="#9a9a9a" stroke-width="0.5" rx="0.8"/><rect x="4.3" y="13.3" width="176.7" height="4.8" fill="#f2f2f2"/><line x1="4" y1="18.1" x2="181.3" y2="18.1" stroke="#9a9a9a" stroke-width="0.5"/><line x1="4" y1="64.5" x2="181.3" y2="64.5" stroke="#9a9a9a" stroke-width="0.5"/><line x1="92.4" y1="13" x2="92.4" y2="116.2" stroke="#9a9a9a" stroke-width="0.5"/><rect x="35" y="15" width="24" height="1.1" fill="#808080"/><rect x="124" y="15" width="24" height="1.1" fill="#808080"/><rect x="33.7" y="18.6" width="29" height="45.6" fill="#fcebf6"/><svg x="39.2" y="19.8" width="18" height="43.5" viewBox="715 185 205 535" preserveAspectRatio="none" filter="url(#bw)"><use href="#jeansS" x="433.5" y="172" width="559.5" height="578"/></svg><rect x="122" y="18.6" width="29" height="45.6" fill="#fcebf6"/><svg x="127.5" y="19.8" width="18" height="43.5" viewBox="500 185 205 535" preserveAspectRatio="none" filter="url(#bw)"><use href="#jeansS" x="433.5" y="172" width="559.5" height="578"/></svg><circle cx="9.8" cy="67.3" r="1" fill="#e2343f"/><rect x="13" y="66.8" width="36" height="0.75" fill="#a8a8a8"/><circle cx="9.8" cy="70.2" r="1" fill="#e2343f"/><rect x="13" y="69.7" width="24" height="0.75" fill="#a8a8a8"/><circle cx="9.8" cy="73.1" r="1" fill="#e2343f"/><rect x="13" y="72.6" width="32" height="0.75" fill="#a8a8a8"/><circle cx="9.8" cy="76.0" r="1" fill="#e2343f"/><rect x="13" y="75.5" width="25" height="0.75" fill="#a8a8a8"/><circle cx="9.8" cy="78.89999999999999" r="1" fill="#e2343f"/><rect x="13" y="78.39999999999999" width="4" height="0.75" fill="#a8a8a8"/><circle cx="9.8" cy="81.8" r="1" fill="#e2343f"/><rect x="13" y="81.3" width="25" height="0.75" fill="#a8a8a8"/><circle cx="9.8" cy="84.69999999999999" r="1" fill="#e2343f"/><rect x="13" y="84.19999999999999" width="10" height="0.75" fill="#a8a8a8"/><circle cx="9.8" cy="87.6" r="1" fill="#e2343f"/><rect x="13" y="87.1" width="16" height="0.75" fill="#a8a8a8"/><circle cx="9.8" cy="90.5" r="1" fill="#e2343f"/><rect x="13" y="90.0" width="24" height="0.75" fill="#a8a8a8"/><circle cx="98.3" cy="67.3" r="1" fill="#e2343f"/><rect x="101.5" y="66.8" width="36" height="0.75" fill="#a8a8a8"/><circle cx="98.3" cy="70.2" r="1" fill="#e2343f"/><rect x="101.5" y="69.7" width="21" height="0.75" fill="#a8a8a8"/><circle cx="98.3" cy="73.1" r="1" fill="#e2343f"/><rect x="101.5" y="72.6" width="31" height="0.75" fill="#a8a8a8"/><circle cx="98.3" cy="76.0" r="1" fill="#e2343f"/><rect x="101.5" y="75.5" width="18" height="0.75" fill="#a8a8a8"/><circle cx="98.3" cy="78.89999999999999" r="1" fill="#e2343f"/><rect x="101.5" y="78.39999999999999" width="33" height="0.75" fill="#a8a8a8"/><circle cx="98.3" cy="81.8" r="1" fill="#e2343f"/><rect x="101.5" y="81.3" width="21" height="0.75" fill="#a8a8a8"/><circle cx="98.3" cy="84.69999999999999" r="1" fill="#e2343f"/><rect x="101.5" y="84.19999999999999" width="46" height="0.75" fill="#a8a8a8"/><circle cx="98.3" cy="87.6" r="1" fill="#e2343f"/><rect x="101.5" y="87.1" width="11" height="0.75" fill="#a8a8a8"/><circle cx="98.3" cy="90.5" r="1" fill="#e2343f"/><rect x="101.5" y="90.0" width="46" height="0.75" fill="#a8a8a8"/><circle cx="98.3" cy="93.39999999999999" r="1" fill="#e2343f"/><rect x="101.5" y="92.89999999999999" width="31" height="0.75" fill="#a8a8a8"/><circle cx="98.3" cy="96.3" r="1" fill="#e2343f"/><rect x="101.5" y="95.8" width="24" height="0.75" fill="#a8a8a8"/><circle cx="38.5" cy="22.2" r="1.2" fill="#e2343f"/><circle cx="42.6" cy="21.4" r="1.2" fill="#e2343f"/><circle cx="42" cy="23.8" r="1.2" fill="#e2343f"/><circle cx="57.2" cy="21.8" r="1.2" fill="#e2343f"/><circle cx="58.5" cy="24" r="1.2" fill="#e2343f"/><circle cx="59" cy="25" r="1.2" fill="#e2343f"/><circle cx="59.8" cy="28.2" r="1.2" fill="#e2343f"/><circle cx="58.9" cy="30.8" r="1.2" fill="#e2343f"/><circle cx="57" cy="60.8" r="1.2" fill="#e2343f"/><circle cx="141.7" cy="24.2" r="1.2" fill="#e2343f"/><circle cx="148.6" cy="21.7" r="1.2" fill="#e2343f"/><circle cx="148.5" cy="23.5" r="1.2" fill="#e2343f"/><circle cx="146" cy="25.4" r="1.2" fill="#e2343f"/><circle cx="150.5" cy="27" r="1.2" fill="#e2343f"/><circle cx="127" cy="31" r="1.2" fill="#e2343f"/><circle cx="127.5" cy="32.5" r="1.2" fill="#e2343f"/><circle cx="149" cy="34" r="1.2" fill="#e2343f"/><circle cx="151" cy="51.5" r="1.2" fill="#e2343f"/><circle cx="151" cy="59.8" r="1.2" fill="#e2343f"/></svg></div>
  <div class="num" style="top:369px;">2</div>
<div class="abs" style="left:104px;top:420px;width:185px;height:129px;opacity:0.54;"><svg width="185" height="129" viewBox="0 0 185 129"><rect width="185" height="129" fill="#fff"/><rect x="4" y="7.8" width="8.6" height="3" rx="1.5" fill="#cfcfcf"/><rect x="13.3" y="7.8" width="6.5" height="3" rx="1.5" fill="#cfcfcf"/><rect x="20.5" y="7.8" width="8.5" height="3" rx="1.5" fill="#cfcfcf"/><rect x="29.7" y="7.8" width="8.5" height="3" rx="1.5" fill="#cfcfcf"/><rect x="38.9" y="7.8" width="8.8" height="3" rx="1.5" fill="#cfcfcf"/><rect x="135" y="4.8" width="33" height="1.2" fill="#8a8a8a"/><svg x="174.5" y="2.5" width="6.5" height="8.5" viewBox="500 185 420 535" preserveAspectRatio="none"><use href="#jeansS" x="433.5" y="172" width="559.5" height="578"/></svg><rect x="4" y="118.5" width="22" height="0.8" fill="#9a9a9a"/><rect x="4" y="120.3" width="33" height="0.8" fill="#9a9a9a"/><rect x="84" y="120.3" width="14" height="0.8" fill="#9a9a9a"/><rect x="100" y="117.5" width="5" height="5" fill="#f2f2f2"/><rect x="154" y="118.5" width="28" height="0.8" fill="#9a9a9a"/><rect x="154" y="120.3" width="10" height="0.8" fill="#9a9a9a"/><rect x="86" y="10.6" width="13" height="1.2" fill="#808080"/><rect x="4" y="13" width="177.3" height="103.2" fill="none" stroke="#9a9a9a" stroke-width="0.5" rx="0.8"/><rect x="4.3" y="13.3" width="176.7" height="4.8" fill="#f2f2f2"/><line x1="4" y1="18.1" x2="181.3" y2="18.1" stroke="#9a9a9a" stroke-width="0.5"/><line x1="4" y1="64.5" x2="181.3" y2="64.5" stroke="#9a9a9a" stroke-width="0.5"/><line x1="92.4" y1="13" x2="92.4" y2="116.2" stroke="#9a9a9a" stroke-width="0.5"/><rect x="35" y="15" width="24" height="1.1" fill="#808080"/><rect x="124" y="15" width="24" height="1.1" fill="#808080"/><rect x="33.7" y="18.6" width="29" height="45.6" fill="#fcebf6"/><svg x="39.2" y="19.8" width="18" height="43.5" viewBox="500 185 205 535" preserveAspectRatio="none"><use href="#jeansS" x="433.5" y="172" width="559.5" height="578"/></svg><rect x="122" y="18.6" width="29" height="45.6" fill="#fcebf6"/><svg x="127.5" y="19.8" width="18" height="43.5" viewBox="715 185 205 535" preserveAspectRatio="none"><use href="#jeansS" x="433.5" y="172" width="559.5" height="578"/></svg><circle cx="9.8" cy="67.3" r="1" fill="#e2343f"/><rect x="13" y="66.8" width="11" height="0.75" fill="#a8a8a8"/><circle cx="9.8" cy="70.2" r="1" fill="#e2343f"/><rect x="13" y="69.7" width="10" height="0.75" fill="#a8a8a8"/><circle cx="9.8" cy="73.1" r="1" fill="#e2343f"/><rect x="13" y="72.6" width="11" height="0.75" fill="#a8a8a8"/><circle cx="9.8" cy="76.0" r="1" fill="#e2343f"/><rect x="13" y="75.5" width="10" height="0.75" fill="#a8a8a8"/><circle cx="9.8" cy="78.89999999999999" r="1" fill="#e2343f"/><rect x="13" y="78.39999999999999" width="15" height="0.75" fill="#a8a8a8"/><circle cx="9.8" cy="81.8" r="1" fill="#e2343f"/><rect x="13" y="81.3" width="10" height="0.75" fill="#a8a8a8"/><rect x="10" y="84.5" width="30" height="0.75" fill="#a8a8a8"/><rect x="10" y="88.3" width="10" height="0.75" fill="#a8a8a8"/><rect x="10" y="92.1" width="22" height="0.75" fill="#a8a8a8"/><rect x="10" y="95.9" width="28" height="0.75" fill="#a8a8a8"/><rect x="10" y="99.7" width="35" height="0.75" fill="#a8a8a8"/><rect x="10" y="103.5" width="47" height="0.75" fill="#a8a8a8"/><circle cx="98.3" cy="67.3" r="1" fill="#e2343f"/><rect x="101.5" y="66.8" width="8" height="0.75" fill="#a8a8a8"/><circle cx="98.3" cy="70.2" r="1" fill="#e2343f"/><rect x="101.5" y="69.7" width="8" height="0.75" fill="#a8a8a8"/><circle cx="98.3" cy="73.1" r="1" fill="#e2343f"/><rect x="101.5" y="72.6" width="5" height="0.75" fill="#a8a8a8"/><circle cx="98.3" cy="76.0" r="1" fill="#e2343f"/><rect x="101.5" y="75.5" width="9" height="0.75" fill="#a8a8a8"/><circle cx="98.3" cy="78.89999999999999" r="1" fill="#e2343f"/><rect x="101.5" y="78.39999999999999" width="13" height="0.75" fill="#a8a8a8"/><rect x="98.5" y="81.5" width="30" height="0.75" fill="#a8a8a8"/><rect x="98.5" y="85.7" width="10" height="0.75" fill="#a8a8a8"/><rect x="98.5" y="89.9" width="25" height="0.75" fill="#a8a8a8"/><rect x="98.5" y="94.1" width="35" height="0.75" fill="#a8a8a8"/><circle cx="61.1" cy="21.4" r="1.2" fill="#e2343f"/><circle cx="50.3" cy="22.5" r="1.2" fill="#e2343f"/><circle cx="52.7" cy="24.4" r="1.2" fill="#e2343f"/><circle cx="60.6" cy="40" r="1.2" fill="#e2343f"/><circle cx="122.5" cy="21.7" r="1.2" fill="#e2343f"/><circle cx="122.5" cy="23" r="1.2" fill="#e2343f"/><circle cx="122.5" cy="25" r="1.2" fill="#e2343f"/><circle cx="146.2" cy="28.7" r="1.2" fill="#e2343f"/><circle cx="122.5" cy="39.5" r="1.2" fill="#e2343f"/></svg></div>
  <div class="num" style="top:563px;">3</div>
<div class="abs" style="left:104px;top:614px;width:185px;height:129px;opacity:0.54;"><svg width="185" height="129" viewBox="0 0 185 129"><rect width="185" height="129" fill="#fff"/><rect x="4" y="7.8" width="8.6" height="3" rx="1.5" fill="#cfcfcf"/><rect x="13.3" y="7.8" width="6.5" height="3" rx="1.5" fill="#cfcfcf"/><rect x="20.5" y="7.8" width="8.5" height="3" rx="1.5" fill="#cfcfcf"/><rect x="29.7" y="7.8" width="8.5" height="3" rx="1.5" fill="#cfcfcf"/><rect x="38.9" y="7.8" width="8.8" height="3" rx="1.5" fill="#cfcfcf"/><rect x="135" y="4.8" width="33" height="1.2" fill="#8a8a8a"/><svg x="174.5" y="2.5" width="6.5" height="8.5" viewBox="500 185 420 535" preserveAspectRatio="none"><use href="#jeansS" x="433.5" y="172" width="559.5" height="578"/></svg><rect x="4" y="118.5" width="22" height="0.8" fill="#9a9a9a"/><rect x="4" y="120.3" width="33" height="0.8" fill="#9a9a9a"/><rect x="84" y="120.3" width="14" height="0.8" fill="#9a9a9a"/><rect x="100" y="117.5" width="5" height="5" fill="#f2f2f2"/><rect x="154" y="118.5" width="28" height="0.8" fill="#9a9a9a"/><rect x="154" y="120.3" width="10" height="0.8" fill="#9a9a9a"/><rect x="86" y="10.6" width="13" height="1.2" fill="#808080"/><rect x="4" y="13" width="177.3" height="103.2" fill="none" stroke="#9a9a9a" stroke-width="0.5" rx="0.8"/><rect x="4.3" y="13.3" width="176.7" height="4.8" fill="#f2f2f2"/><line x1="4" y1="18.1" x2="181.3" y2="18.1" stroke="#9a9a9a" stroke-width="0.5"/><rect x="4.5" y="18.400000000000002" width="57.5" height="23.799999999999997" fill="#f0f0f0"/><rect x="62.6" y="18.400000000000002" width="59.2" height="23.799999999999997" fill="#f0f0f0"/><rect x="122.4" y="18.400000000000002" width="58.6" height="23.799999999999997" fill="#f0f0f0"/><rect x="24" y="14.8" width="18" height="1.1" fill="#808080"/><rect x="83.2" y="14.8" width="18" height="1.1" fill="#808080"/><rect x="142.7" y="14.8" width="18" height="1.1" fill="#808080"/><rect x="4.3" y="65.3" width="176.7" height="4.8" fill="#f2f2f2"/><line x1="4" y1="70.1" x2="181.3" y2="70.1" stroke="#9a9a9a" stroke-width="0.5"/><rect x="4.5" y="70.39999999999999" width="57.5" height="23.80000000000001" fill="#f0f0f0"/><rect x="62.6" y="70.39999999999999" width="59.2" height="23.80000000000001" fill="#f0f0f0"/><rect x="122.4" y="70.39999999999999" width="58.6" height="23.80000000000001" fill="#f0f0f0"/><rect x="24" y="66.8" width="18" height="1.1" fill="#808080"/><rect x="83.2" y="66.8" width="18" height="1.1" fill="#808080"/><rect x="142.7" y="66.8" width="18" height="1.1" fill="#808080"/><line x1="4" y1="64.5" x2="181.3" y2="64.5" stroke="#9a9a9a" stroke-width="0.5"/><line x1="62.3" y1="13" x2="62.3" y2="116.2" stroke="#9a9a9a" stroke-width="0.6"/><line x1="122.1" y1="13" x2="122.1" y2="116.2" stroke="#9a9a9a" stroke-width="0.6"/><rect x="15.2" y="18.4" width="36.4" height="23.3" fill="#e8e8e6"/><circle cx="24" cy="26" r="6" fill="#7d6d45"/><circle cx="24" cy="26" r="2.5" fill="#5a4c2c"/><path d="M38,36 L47,29 L50,33 L41,40 Z" fill="#6e603d"/><rect x="73.1" y="18.4" width="38.6" height="23.3" fill="#1e1e1e"/><rect x="76" y="23" width="33" height="14" fill="#d8dde6"/><path d="M79,27 Q88,24 96,29 T106,28" stroke="#5560a0" stroke-width="1.2" fill="none"/><rect x="135.5" y="18.4" width="32.4" height="23.3" fill="#1e1e1e"/><path d="M139,20 L163,21 L166,41 L141,41 Z" fill="#8a8c88"/><rect x="21.1" y="70.4" width="24.5" height="23.5" fill="#f4f2ee"/><path d="M25,75 Q33,82 40,74 M27,90 Q33,80 42,88" stroke="#dddad2" stroke-width="2" fill="none"/><rect x="79.8" y="70.4" width="26" height="23.5" fill="#eeeeea"/><circle cx="86" cy="75" r="4.5" fill="#5e5530"/><circle cx="86" cy="88" r="4.5" fill="#5e5530"/><circle cx="99" cy="88" r="4.2" fill="#aaa" stroke="#444" stroke-width="1"/><rect x="143" y="70.4" width="17" height="23.5" fill="#f0f0f0"/><rect x="145" y="72.5" width="13" height="20.5" rx="4" fill="#e3a54a"/><circle cx="111" cy="27.2" r="1.2" fill="#e2343f"/><circle cx="152.5" cy="28.2" r="1.2" fill="#e2343f"/><circle cx="42" cy="79.6" r="1.2" fill="#e2343f"/><circle cx="96" cy="78" r="1.2" fill="#e2343f"/><circle cx="160.5" cy="78.5" r="1.2" fill="#e2343f"/><circle cx="9.7" cy="46" r="1.2" fill="#e2343f"/><circle cx="68.7" cy="46" r="1.2" fill="#e2343f"/><circle cx="128" cy="46" r="1.2" fill="#e2343f"/><circle cx="9.7" cy="98" r="1.2" fill="#e2343f"/><circle cx="68.7" cy="98" r="1.2" fill="#e2343f"/><circle cx="128" cy="98" r="1.2" fill="#e2343f"/><rect x="9" y="45.5" width="8" height="0.75" fill="#a8a8a8"/><rect x="9" y="47.8" width="22" height="0.75" fill="#a8a8a8"/><rect x="9" y="50.1" width="13" height="0.75" fill="#a8a8a8"/><rect x="9" y="52.4" width="10" height="0.75" fill="#a8a8a8"/><rect x="9" y="54.7" width="45" height="0.75" fill="#a8a8a8"/><rect x="72" y="48.0" width="24" height="0.75" fill="#a8a8a8"/><rect x="72" y="50.3" width="12" height="0.75" fill="#a8a8a8"/><rect x="72" y="52.6" width="16" height="0.75" fill="#a8a8a8"/><rect x="72" y="54.9" width="15" height="0.75" fill="#a8a8a8"/><rect x="72" y="57.2" width="18" height="0.75" fill="#a8a8a8"/><rect x="72" y="61.8" width="42" height="0.75" fill="#a8a8a8"/><rect x="131" y="48.0" width="20" height="0.75" fill="#a8a8a8"/><rect x="131" y="50.3" width="12" height="0.75" fill="#a8a8a8"/><rect x="131" y="52.6" width="11" height="0.75" fill="#a8a8a8"/><rect x="131" y="54.9" width="13" height="0.75" fill="#a8a8a8"/><rect x="131" y="57.2" width="10" height="0.75" fill="#a8a8a8"/><rect x="9" y="98.0" width="18" height="0.75" fill="#a8a8a8"/><rect x="9" y="100.2" width="18" height="0.75" fill="#a8a8a8"/><rect x="9" y="104.6" width="12" height="0.75" fill="#a8a8a8"/><rect x="9" y="106.8" width="12" height="0.75" fill="#a8a8a8"/><rect x="67.5" y="98.0" width="5" height="0.75" fill="#a8a8a8"/><rect x="67.5" y="100.2" width="14" height="0.75" fill="#a8a8a8"/><rect x="67.5" y="104.6" width="4" height="0.75" fill="#a8a8a8"/><rect x="67.5" y="106.8" width="36" height="0.75" fill="#a8a8a8"/><rect x="126.5" y="98.0" width="16" height="0.75" fill="#a8a8a8"/><rect x="126.5" y="100.2" width="38" height="0.75" fill="#a8a8a8"/><rect x="126.5" y="104.6" width="22" height="0.75" fill="#a8a8a8"/><rect x="126.5" y="106.8" width="45" height="0.75" fill="#a8a8a8"/></svg></div>
  <div class="num" style="top:757px;">4</div>
<div class="abs" style="left:104px;top:808px;width:185px;height:129px;opacity:0.54;"><svg width="185" height="129" viewBox="0 0 185 129"><rect width="185" height="129" fill="#fff"/><rect x="4" y="7.8" width="8.6" height="3" rx="1.5" fill="#cfcfcf"/><rect x="13.3" y="7.8" width="6.5" height="3" rx="1.5" fill="#cfcfcf"/><rect x="20.5" y="7.8" width="8.5" height="3" rx="1.5" fill="#cfcfcf"/><rect x="29.7" y="7.8" width="8.5" height="3" rx="1.5" fill="#cfcfcf"/><rect x="38.9" y="7.8" width="8.8" height="3" rx="1.5" fill="#cfcfcf"/><rect x="135" y="4.8" width="33" height="1.2" fill="#8a8a8a"/><svg x="174.5" y="2.5" width="6.5" height="8.5" viewBox="500 185 420 535" preserveAspectRatio="none"><use href="#jeansS" x="433.5" y="172" width="559.5" height="578"/></svg><rect x="4" y="118.5" width="22" height="0.8" fill="#9a9a9a"/><rect x="4" y="120.3" width="33" height="0.8" fill="#9a9a9a"/><rect x="84" y="120.3" width="14" height="0.8" fill="#9a9a9a"/><rect x="100" y="117.5" width="5" height="5" fill="#f2f2f2"/><rect x="154" y="118.5" width="28" height="0.8" fill="#9a9a9a"/><rect x="154" y="120.3" width="10" height="0.8" fill="#9a9a9a"/><rect x="86" y="10.6" width="13" height="1.2" fill="#808080"/><rect x="4" y="13" width="177.3" height="103.2" fill="none" stroke="#9a9a9a" stroke-width="0.5" rx="0.8"/><rect x="4.3" y="13.3" width="176.7" height="4.8" fill="#f2f2f2"/><line x1="4" y1="18.1" x2="181.3" y2="18.1" stroke="#9a9a9a" stroke-width="0.5"/><line x1="62.4" y1="13" x2="62.4" y2="116" stroke="#9a9a9a" stroke-width="0.6"/><line x1="121.9" y1="13" x2="121.9" y2="116" stroke="#9a9a9a" stroke-width="0.6"/><rect x="24" y="14.8" width="18" height="1.1" fill="#808080"/><rect x="83.2" y="14.8" width="18" height="1.1" fill="#808080"/><rect x="142.7" y="14.8" width="18" height="1.1" fill="#808080"/><rect x="4.5" y="18.4" width="57.5" height="23.5" fill="#f0f0f0"/><rect x="62.8" y="18.4" width="58.8" height="23.5" fill="#f0f0f0"/><rect x="122.3" y="18.4" width="58.8" height="23.5" fill="#f0f0f0"/><path d="M28,18.5 L33,18.5 L39,35 L39,41.8 L30,41.8 L27,30 Z" fill="#2a4d8a"/><path d="M30,22 L34,30 L30,38" stroke="#ddd" stroke-width="1.2" fill="none"/><rect x="78" y="18.2" width="28.7" height="23.6" fill="#3b2e28"/><rect x="78" y="18.2" width="28.7" height="6" fill="#6f5a3a"/><path d="M86,25 L102,24 L103,41.8 L88,41.8 Z" fill="#e6e6e6"/><rect x="139.8" y="18.2" width="23.9" height="23.6" fill="#3f68a8"/><circle cx="36" cy="21.5" r="1.1" fill="#e2343f"/><circle cx="38" cy="26" r="1.1" fill="#e2343f"/><circle cx="92" cy="25" r="1.1" fill="#e2343f"/><circle cx="154" cy="22" r="1.1" fill="#e2343f"/><circle cx="6" cy="44" r="1.1" fill="#e2343f"/><circle cx="6" cy="47" r="1.1" fill="#e2343f"/><circle cx="64.5" cy="44" r="1.1" fill="#e2343f"/><circle cx="123.5" cy="44" r="1.1" fill="#e2343f"/></svg></div>
</div>

<div id="page">
  <div class="t" style="left:867px;top:23px;font-size:17px;">[default] Fitted Denim Jeans</div>
  <svg class="abs" style="left:1112px;top:17px" width="50" height="51"><use href="#jeansS" width="50" height="51"/></svg>
  <div class="tag" style="left:23px;width:49px;">201819</div>
  <div class="tag" style="left:78px;width:36px;">2019</div>
  <div class="tag" style="left:120px;width:48px;">DENIM</div>
  <div class="tag" style="left:173px;width:48px;">JEANS</div>
  <div class="tag" style="left:226px;width:50px;">PANTS</div>
  <div class="abs" style="left:28.5px;top:88px;width:559.5px;height:594px;background:#f3f3f3;border-radius:6px;"></div>
  <svg class="abs" style="left:28.5px;top:96px" width="559.5" height="578"><use href="#jeans" width="559.5" height="578"/></svg>

  <div class="t b" style="left:607px;top:87px;">Page Index</div>
  <div class="hr" style="left:605px;top:101px;width:525px;"></div>
  <div class="t" style="left:607px;top:105.5px;">- Summary</div><div class="t" style="left:995px;top:105.5px;">P.1</div>
  <div class="t" style="left:607px;top:124px;">- Sketches</div><div class="t" style="left:995px;top:124px;">P.2 - P.3</div>
  <div class="t" style="left:607px;top:142.5px;">- Materials</div><div class="t" style="left:995px;top:142.5px;">P.4 - P.7</div>
  <div class="t" style="left:607px;top:161px;">- Sizes</div><div class="t" style="left:995px;top:161px;">P.8 - P.10</div>
  <div class="t" style="left:607px;top:180px;">- Fit Sample</div><div class="t" style="left:995px;top:180px;">P.11 - P.12</div>
  <div class="t" style="left:607px;top:198.5px;">- Denim Washes and Treatment</div><div class="t" style="left:995px;top:198.5px;">P.13 - P.14</div>

  <div class="t b" style="left:607px;top:315px;">Members</div>
  <div class="hr" style="left:605px;top:329px;width:525px;"></div>
  <div class="t" style="left:607px;top:333.5px;">- Owner</div><div class="t" style="left:837px;top:333.5px;">Lucy Watson</div>

  <div class="t b" style="left:607px;top:380.5px;">Style Info</div>
  <div class="hr" style="left:605px;top:394.5px;width:525px;"></div>
  <div class="t" style="left:607px;top:399px;">Fitted denim jeans with front side pocket and back patch pocket. It has a back yoke panel and belt loops.</div>
  <div class="t" style="left:607px;top:417.5px;">- Units: Inches</div>
  <div class="t" style="left:607px;top:436px;">- Sizes: M</div>
  <div class="t" style="left:607px;top:455px;">- Sample Size: M</div>
  <div class="t" style="left:607px;top:473.5px;">- Color Combo: BLUE</div>

  <div class="t" style="left:23px;top:766px;">Powered by Techpacker.com</div>
  <div class="t" style="left:23px;top:780px;">Confidential Information. All rights reserved.</div>
  <div class="t" style="left:544px;top:780px;">Techpacker Limited</div>
  <div class="abs" style="left:656px;top:769px;width:34px;height:34px;background:#f3f3f3;"></div>
  <div class="t" style="left:980px;top:766px;">Last Updated on Jan 3, 2025 22 : 35</div>
  <div class="t" style="left:980px;top:780px;">Page 1 of 14</div>
<!--PAGEEND--></div>

<div class="abs" style="left:1511.7px;top:854px;width:63.2px;height:63.2px;border-radius:50%;background:#13d3b0;z-index:6;box-shadow:0 1px 6px rgba(0,0,0,.06),0 2px 32px rgba(0,0,0,.16);">
  <svg class="abs" style="left:17px;top:15px" width="30" height="33" viewBox="0 0 30 33"><path d="M3,0.7 L25.5,0.7 Q28.3,0.7 28.3,3.5 L28.3,32.3 L20,29 L3,29 Q0.2,29 0.2,26.2 L0.2,3.5 Q0.2,0.7 3,0.7 Z" fill="#fff"/><path d="M4.5,20 Q14.2,27 24,20" fill="none" stroke="#13d3b0" stroke-width="2"/></svg>
</div>
</body></html>
